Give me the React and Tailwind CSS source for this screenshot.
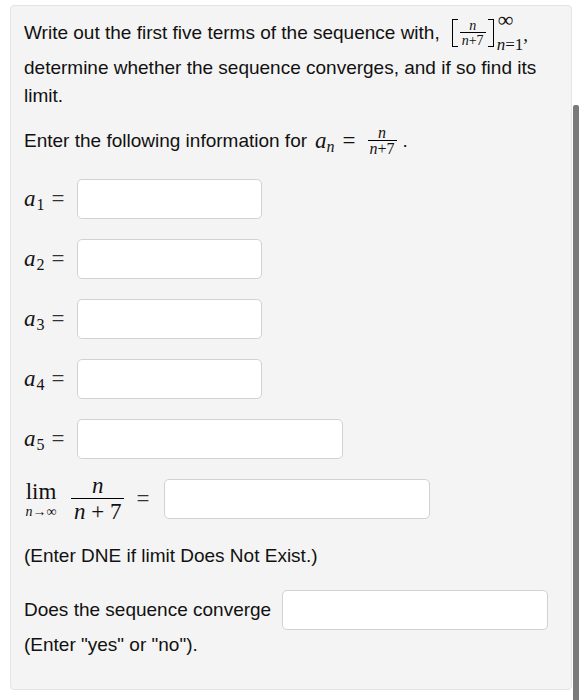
import React from "react";

const sans = { fontFamily: '"Liberation Sans", Arial, Helvetica, sans-serif' };

// small inline fraction like MathJax text-style
const SmallFrac = ({ num, den, size = "text-[14px] leading-[13px]" }) => (
  <span className={`inline-flex flex-col items-center align-middle mx-[2px] ${size} font-['Liberation_Serif',serif]`}>
    <span className="italic px-[2px]">{num}</span>
    <span className="w-full border-t border-black" />
    <span className="px-[2px] pt-[1px]">{den}</span>
  </span>
);

const Var = ({ sub }) => (
  <span className="font-['Liberation_Serif',serif] text-[23px]">
    <span className="italic">a</span>
    <span className="text-[16px] relative top-[4px] ml-[1px]">{sub}</span>
  </span>
);

const Box = ({ w = "w-[185px]" }) => (
  <input
    type="text"
    className={`${w} h-[40px] bg-white border border-[#d2d2d2] rounded-[5px] outline-none`}
  />
);

const TermRow = ({ sub, w }) => (
  <div className="flex items-center h-[40px]">
    <div className="w-[53px] flex items-center">
      <Var sub={sub} />
      <span className="font-['Liberation_Serif',serif] text-[23px] ml-[7px] text-[#333]">=</span>
    </div>
    <Box w={w} />
  </div>
);

export default function App() {
  return (
    <div className="relative w-[583px] h-[700px] bg-white overflow-hidden text-[19px] text-[#111]" style={sans}>
      <div className="ml-[10px] mt-[5px] w-[562px] h-[685px] bg-[#f4f4f4] border border-[#e4e4e4] rounded-[4px] pl-[13px] pt-[8px]">
        {/* question text */}
        <div className="h-[38px] flex items-center whitespace-nowrap">
          <span>Write out the first five terms of the sequence with,</span>
          <span className="inline-flex items-center ml-[12px] font-['Liberation_Serif',serif]">
            <span className="w-[6px] h-[28px] border-l border-t border-b border-black" />
            <SmallFrac num="n" den={<span><i>n</i>+7</span>} />
            <span className="w-[6px] h-[28px] border-r border-t border-b border-black" />
            <span className="flex flex-col ml-[3px] leading-[16px]">
              <span className="text-[22px] leading-[16px] relative top-[-5px] ml-[1px]">∞</span>
              <span className="text-[17px] relative top-[4px]"><i>n</i>=1</span>
            </span>
            <span className="relative top-[2px]">,</span>
          </span>
        </div>
        <div className="leading-[32px] whitespace-nowrap">determine whether the sequence converges, and if so find its</div>
        <div className="leading-[24px]">limit.</div>

        <div className="mt-[19px] h-[28px] flex items-center">
          <span>Enter the following information for</span>
          <span className="ml-[8px] font-['Liberation_Serif',serif] text-[23px]">
            <i>a</i>
            <i className="text-[16px] relative top-[4px]">n</i>
          </span>
          <span className="font-['Liberation_Serif',serif] text-[23px] ml-[8px] mr-[10px]">=</span>
          <SmallFrac num="n" den={<span><i>n</i>+7</span>} size="text-[16px] leading-[14px]" />
          <span className="ml-[4px]">.</span>
        </div>

        {/* terms */}
        <div className="mt-[24px] flex flex-col gap-[20px]">
          <TermRow sub="1" />
          <TermRow sub="2" />
          <TermRow sub="3" />
          <TermRow sub="4" />
          <TermRow sub="5" w="w-[266px]" />

          {/* limit */}
          <div className="flex items-center h-[40px]">
            <div className="flex items-center font-['Liberation_Serif',serif] w-[140px]">
              <span className="flex flex-col items-center w-[42px] ml-[-4px]">
                <span className="text-[23px] leading-[22px]">lim</span>
                <span className="text-[14px] leading-[13px] mt-[2px]"><i>n</i>→∞</span>
              </span>
              <span className="flex flex-col items-center ml-[9px] text-[23px]">
                <span className="italic leading-[24px] px-[3px]">n</span>
                <span className="w-full border-t border-black" />
                <span className="leading-[26px] px-[3px]"><i>n</i> + 7</span>
              </span>
              <span className="text-[23px] ml-[12px] text-[#333]">=</span>
            </div>
            <Box w="w-[266px]" />
          </div>
        </div>

        <div className="mt-[23px] h-[28px] flex items-center">(Enter DNE if limit Does Not Exist.)</div>

        <div className="mt-[20px] flex items-center h-[40px]">
          <span className="w-[258px]">Does the sequence converge</span>
          <Box w="w-[266px]" />
        </div>
        <div className="h-[30px] flex items-center">(Enter "yes" or "no").</div>
      </div>

      {/* scrollbar */}
      <div className="absolute left-[573px] top-[105px] w-[6px] h-[595px] bg-[#7a7a7a] rounded-t-[2px]" />
    </div>
  );
}
